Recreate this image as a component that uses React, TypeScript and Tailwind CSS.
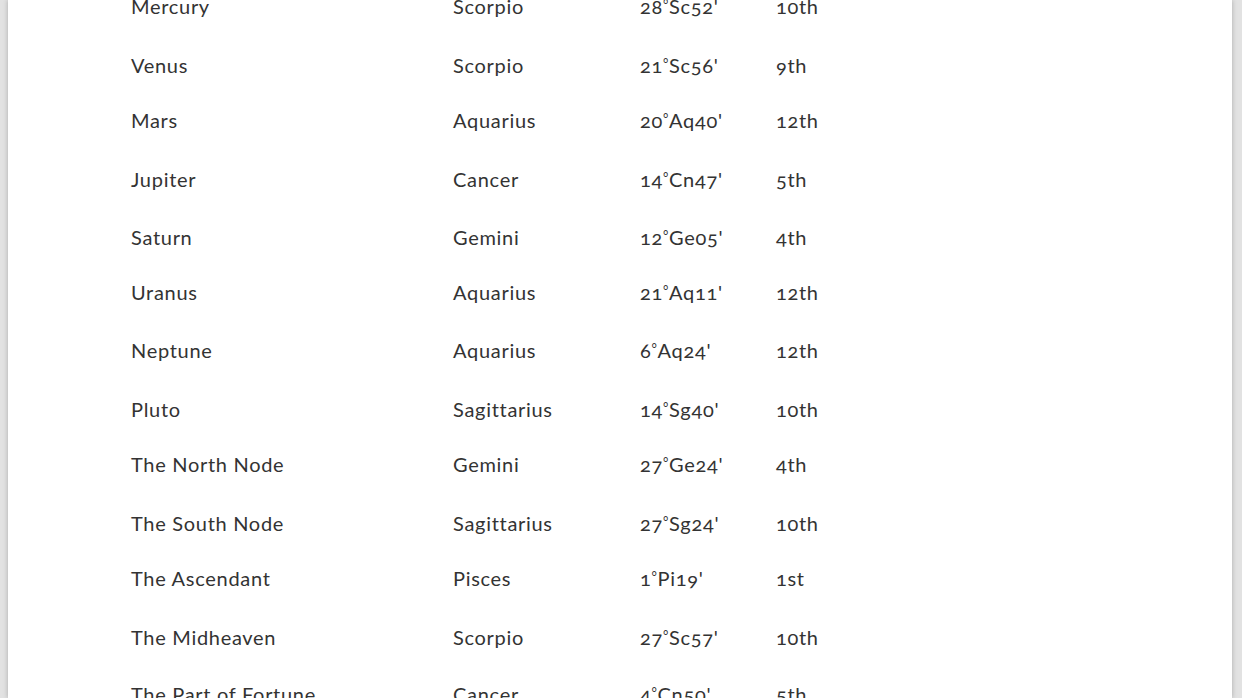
import React from "react";

const rows: [string, string, string, string, number][] = [
  ["Mercury", "Scorpio", "28°Sc52'", "10th", 59],
  ["Venus", "Scorpio", "21°Sc56'", "9th", 55],
  ["Mars", "Aquarius", "20°Aq40'", "12th", 59],
  ["Jupiter", "Cancer", "14°Cn47'", "5th", 58],
  ["Saturn", "Gemini", "12°Ge05'", "4th", 55],
  ["Uranus", "Aquarius", "21°Aq11'", "12th", 58],
  ["Neptune", "Aquarius", "6°Aq24'", "12th", 59],
  ["Pluto", "Sagittarius", "14°Sg40'", "10th", 55],
  ["The North Node", "Gemini", "27°Ge24'", "4th", 59],
  ["The South Node", "Sagittarius", "27°Sg24'", "10th", 55],
  ["The Ascendant", "Pisces", "1°Pi19'", "1st", 59],
  ["The Midheaven", "Scorpio", "27°Sc57'", "10th", 57],
  ["The Part of Fortune", "Cancer", "4°Cn50'", "5th", 57],
];

function Pos({ v }: { v: string }) {
  const [deg, rest] = v.split("°");
  return (
    <span>
      {deg}
      <span className="text-[13px] relative -top-[5px]">°</span>
      {rest}
    </span>
  );
}

export default function App() {
  return (
    <div className="w-[1242px] h-[698px] overflow-hidden bg-[#e2e2e2] flex justify-start">
      <div className="ml-[8px] w-[1224px] h-[698px] bg-white shadow-[0_0_5px_rgba(0,0,0,0.25)] overflow-hidden">
        <div
          className="-mt-[6px] pl-[123px] text-[#333333] text-[20px] leading-[24px] tracking-[0.7px] font-normal oldstyle-nums"
          style={{ fontFamily: "Lato, 'Open Sans', sans-serif" }}
        >
          {rows.map(([a, b, c, d, h]) => (
            <div key={a} className="flex items-start" style={{ height: h }}>
              <div className="w-[322px] whitespace-nowrap">{a}</div>
              <div className="w-[187px] whitespace-nowrap">{b}</div>
              <div className="w-[136px] whitespace-nowrap">
                <Pos v={c} />
              </div>
              <div className="whitespace-nowrap">{d}</div>
            </div>
          ))}
        </div>
      </div>
    </div>
  );
}
